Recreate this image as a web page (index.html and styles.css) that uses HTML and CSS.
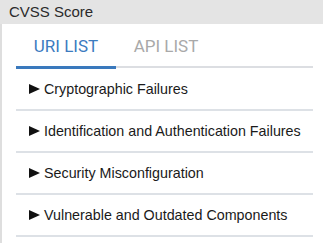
FILE: index.html
```html
<!DOCTYPE html>
<html>
<head>
<meta charset="utf-8">
<link rel="stylesheet" href="styles.css">
</head>
<body>
<div class="header">CVSS Score</div>
<div class="panel">
  <div class="tabs">
    <div class="tab active">URI LIST</div>
    <div class="tab">API LIST</div>
  </div>
  <ul class="list">
    <li class="item"><span class="tri"></span>Cryptographic Failures</li>
    <li class="item"><span class="tri"></span>Identification and Authentication Failures</li>
    <li class="item"><span class="tri"></span>Security Misconfiguration</li>
    <li class="item"><span class="tri"></span>Vulnerable and Outdated Components</li>
  </ul>
</div>
</body>
</html>
```
FILE: styles.css
```css
html, body {
  margin: 0;
  padding: 0;
  background: #fff;
}
body {
  width: 323px;
  height: 243px;
  overflow: hidden;
  font-family: "Liberation Sans", Arial, sans-serif;
}
.header {
  height: 24px;
  line-height: 24px;
  background: #e4e4e4;
  padding-left: 9px;
  font-size: 15px;
  color: #2a2a2a;
}
.panel {
  border-left: 2px solid #dedede;
  padding: 0 10px 6px 14px;
}
.tabs {
  display: flex;
  height: 44px;
  border-bottom: 2px solid #dcdee2;
  box-sizing: border-box;
  font-family: Roboto, "Liberation Sans", sans-serif;
  font-size: 17px;
}
.tab {
  width: 100px;
  text-align: center;
  line-height: 44px;
  color: #a9a9a9;
  box-sizing: border-box;
}
.tab.active {
  color: #3c7bbf;
  border-bottom: 3px solid #3a79bd;
  margin-bottom: -2px;
  height: 45px;
  line-height: 44px;
}
.list {
  list-style: none;
  margin: 0;
  padding: 0;
}
.item {
  display: flex;
  align-items: center;
  height: 40px;
  border-bottom: 2px solid #dde1e6;
  padding-left: 13px;
  font-size: 14.3px;
  color: #1a1a1a;
}
.item:first-child {
  height: 41px;
}
.tri {
  width: 0;
  height: 0;
  border-top: 5.5px solid transparent;
  border-bottom: 5.5px solid transparent;
  border-left: 11px solid #111;
  margin-right: 4px;
}
```
